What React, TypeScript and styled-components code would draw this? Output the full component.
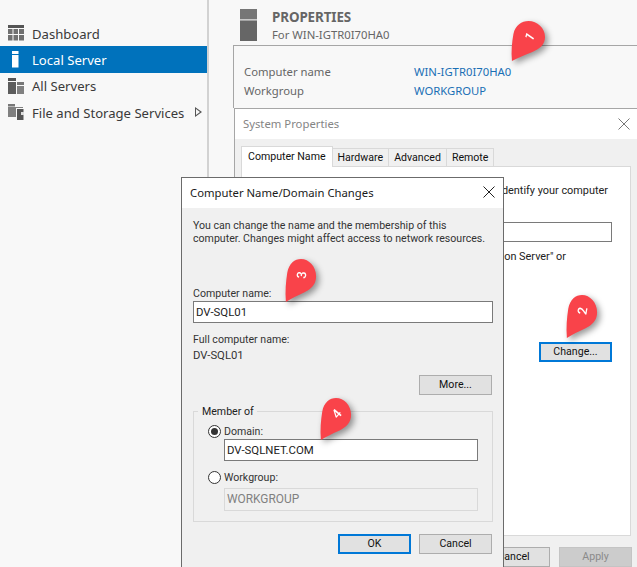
import styled, { createGlobalStyle } from 'styled-components'

const GlobalStyle = createGlobalStyle`
  html, body {
    margin: 0;
    padding: 0;
    background: #f8f8f8;
  }
  * {
    box-sizing: border-box;
  }
`

const Page = styled.div`
  position: relative;
  display: flex;
  width: 637px;
  height: 567px;
  overflow: hidden;
  background: #f8f8f8;
  font-family: 'Noto Sans', 'Open Sans', sans-serif;
  font-size: 11.3px;
  color: #222;
`

const Sidebar = styled.nav`
  flex: none;
  width: 209px;
  padding-top: 20px;
  border-right: 2px solid #d2d2d2;
`

const NavItem = styled.div<{ $active?: boolean }>`
  display: flex;
  align-items: center;
  gap: 8px;
  height: 26.3px;
  padding-left: 8px;
  font-size: 13.1px;
  color: ${(p) => (p.$active ? '#fff' : '#3a3a3a')};
  background: ${(p) => (p.$active ? '#0072bc' : 'transparent')};
  svg {
    flex: none;
  }
`

const NavLabel = styled.span`
  padding-top: 1px;
`

const Caret = styled.span`
  position: relative;
  margin-left: 3px;
  width: 0;
  height: 0;
  border-left: 7px solid #555;
  border-top: 5px solid transparent;
  border-bottom: 5px solid transparent;
  &::after {
    content: '';
    position: absolute;
    left: -6px;
    top: -3.5px;
    border-left: 4.5px solid #f8f8f8;
    border-top: 3.5px solid transparent;
    border-bottom: 3.5px solid transparent;
  }
`

const Main = styled.main`
  flex: 1;
  min-width: 0;
  display: flex;
  flex-direction: column;
`

const Header = styled.header`
  display: flex;
  gap: 15px;
  height: 45px;
  padding: 9px 0 0 31px;
`

const HeaderText = styled.div`
  color: #666;
`

const Title = styled.div`
  font-size: 13.4px;
  font-weight: 700;
  line-height: 17px;
  letter-spacing: -0.1px;
`

const Subtitle = styled.div`
  line-height: 18px;
`

const PropsPanel = styled.section`
  margin-left: 24px;
  margin-right: -4px;
  height: 64px;
  padding: 16px 0 0 10px;
  border: 1px solid #a6a6a6;
  border-bottom: 0;
`

const PropRow = styled.div`
  display: flex;
  height: 19px;
  line-height: 19px;
  color: #666;
`

const PropLabel = styled.span`
  width: 170px;
`

const PropLink = styled.span`
  color: #1a6fb5;
`

const SystemWindow = styled.section`
  flex: 1;
  margin-left: 25px;
  margin-right: -4px;
  display: flex;
  flex-direction: column;
  border-top: 1px solid #a6a6a6;
  border-left: 1px solid #a6a6a6;
  background: #f0f0f0;
`

const TitleBar = styled.div<{ $muted?: boolean }>`
  flex: none;
  display: flex;
  align-items: center;
  justify-content: space-between;
  height: 30px;
  padding: 0 ${(p) => (p.$muted ? '11px' : '8px')} ${(p) => (p.$muted ? '1px' : '2px')} 8px;
  background: #fff;
  color: ${(p) => (p.$muted ? '#858585' : '#1a1a1a')};
`

const SystemBody = styled.div`
  flex: 1;
  min-height: 0;
  padding: 7px 7px 0 6px;
  font-family: Roboto, 'Noto Sans', sans-serif;
  font-size: 10.6px;
`

const Tabs = styled.div`
  display: flex;
  align-items: flex-end;
  height: 20px;
`

const Tab = styled.div<{ $active?: boolean }>`
  position: relative;
  height: ${(p) => (p.$active ? '21px' : '18px')};
  line-height: ${(p) => (p.$active ? '19px' : '18px')};
  padding: 0 ${(p) => (p.$active ? '6px' : '5px')};
  margin-bottom: ${(p) => (p.$active ? '-1px' : '0')};
  background: ${(p) => (p.$active ? '#fff' : '#f0f0f0')};
  border: 1px solid #d9d9d9;
  border-bottom: 0;
  border-left-width: ${(p) => (p.$active ? '1px' : '0')};
  color: #111;
  white-space: nowrap;
`

const TabPane = styled.div`
  height: 370px;
  width: 390px;
  padding: 17px 18px 0 0;
  display: flex;
  flex-direction: column;
  align-items: flex-end;
  background: #fff;
  border: 1px solid #d9d9d9;
`

const PaneText = styled.div<{ $top?: number; $right?: number }>`
  margin-top: ${(p) => p.$top ?? 0}px;
  margin-right: ${(p) => p.$right ?? 0}px;
  font-size: 10.9px;
  line-height: 14px;
  white-space: nowrap;
`

const PaneInput = styled.div`
  margin-top: 24px;
  width: 300px;
  height: 20px;
  border: 1px solid #7a7a7a;
  background: #fff;
`

const Button = styled.button<{ $focused?: boolean; $disabled?: boolean }>`
  flex: none;
  width: 73px;
  height: 20px;
  padding: 0;
  font: inherit;
  line-height: 16px;
  color: ${(p) => (p.$disabled ? '#8a8a8a' : '#111')};
  background: ${(p) => (p.$disabled ? '#cccccc' : '#e1e1e1')};
  border: ${(p) =>
    p.$focused ? '2px solid #0078d7' : `1px solid ${p.$disabled ? '#c4c4c4' : '#adadad'}`};
`

const ChangeWrap = styled.div`
  margin-top: 78px;
`

const WindowFooter = styled.div`
  display: flex;
  justify-content: flex-end;
  gap: 9px;
  height: 20px;
  margin-top: 11px;
  width: 391px;
`

const Dialog = styled.section`
  position: absolute;
  left: 181px;
  top: 177px;
  width: 323px;
  height: 400px;
  border: 1px solid #6b6b6b;
  background: #f0f0f0;
  display: flex;
  flex-direction: column;
`

const DialogBody = styled.div`
  flex: 1;
  display: flex;
  flex-direction: column;
  padding: 11px 10px 0 11px;
  font-family: Roboto, 'Noto Sans', sans-serif;
  font-size: 10.6px;
`

const Intro = styled.p`
  margin: 0;
  line-height: 13px;
  color: #333;
  white-space: nowrap;
`

const FieldLabel = styled.label<{ $top?: number }>`
  display: block;
  margin-top: ${(p) => p.$top ?? 0}px;
  line-height: 15px;
  color: #333;
`

const TextBox = styled.div<{ $disabled?: boolean; $height?: number }>`
  height: ${(p) => p.$height ?? 22}px;
  line-height: ${(p) => (p.$height ?? 22) - 2}px;
  padding-left: 2px;
  font-size: ${(p) => (p.$disabled ? '11.9px' : '11.4px')};
  border: 1px solid ${(p) => (p.$disabled ? '#d9d9d9' : '#7a7a7a')};
  background: ${(p) => (p.$disabled ? '#f0f0f0' : '#fff')};
  color: ${(p) => (p.$disabled ? '#808080' : '#222')};
`

const FullName = styled.div`
  margin-top: 1px;
  font-size: 11.3px;
  line-height: 15px;
  color: #333;
`

const MoreRow = styled.div`
  display: flex;
  justify-content: flex-end;
  margin-top: 12px;
  padding-right: 1px;
`

const MemberBox = styled.fieldset`
  margin: 10px 0 0;
  padding: 6px 14px 0 14px;
  height: 117px;
  border: 1px solid #d9d9d9;
`

const MemberLegend = styled.legend`
  margin-left: -10px;
  padding: 0 3px 0 4px;
  line-height: 13px;
  color: #222;
`

const RadioRow = styled.div<{ $top?: number }>`
  display: flex;
  align-items: center;
  gap: 3px;
  height: 14px;
  margin-top: ${(p) => p.$top ?? 0}px;
  color: #333;
`

const Radio = styled.span<{ $checked?: boolean }>`
  flex: none;
  display: flex;
  align-items: center;
  justify-content: center;
  width: 13px;
  height: 13px;
  border: 1px solid #333;
  border-radius: 50%;
  background: #fff;
  &::after {
    content: '';
    width: 7px;
    height: 7px;
    border-radius: 50%;
    background: ${(p) => (p.$checked ? '#333' : 'transparent')};
  }
`

const Indented = styled.div<{ $top?: number }>`
  margin-left: 16px;
  margin-top: ${(p) => p.$top ?? 0}px;
`

const DialogFooter = styled.div`
  display: flex;
  justify-content: flex-end;
  gap: 8px;
  margin-top: 12px;
  padding-right: 1px;
`

const PinBox = styled.div<{ $x: number; $y: number; $w: number; $h: number }>`
  position: absolute;
  left: ${(p) => p.$x}px;
  top: ${(p) => p.$y}px;
  width: ${(p) => p.$w}px;
  height: ${(p) => p.$h}px;
  filter: drop-shadow(3px 3px 3px rgba(0, 0, 0, 0.4));
  svg {
    display: block;
    width: 100%;
    height: 100%;
  }
`

const PinNumber = styled.span<{ $turn: number }>`
  position: absolute;
  left: 50%;
  top: 7px;
  width: 20px;
  margin-left: -9px;
  text-align: center;
  font-family: Roboto, sans-serif;
  font-size: 13px;
  font-weight: 500;
  line-height: 20px;
  color: #fff;
  transform: rotate(${(p) => p.$turn}deg);
`

type PinProps = { x: number; y: number; w: number; h: number; turn: number; n: string }

const Pin = ({ x, y, w, h, turn, n }: PinProps) => (
  <PinBox $x={x} $y={y} $w={w} $h={h}>
    <svg viewBox="0 0 36 42" preserveAspectRatio="none">
      <path
        d="M1 41C0 31 1 22 2.5 14C4.5 5 11 1 18 1C27 1 35 8 35 17C35 25 29 29 22 32C14 35 7 38 1 41Z"
        fill="#f9434a"
      />
    </svg>
    <PinNumber $turn={turn}>{n}</PinNumber>
  </PinBox>
)

const Close = ({ color }: { color: string }) => (
  <svg width="12" height="12" viewBox="0 0 12 12">
    <path d="M0.5 0.5L11.5 11.5M11.5 0.5L0.5 11.5" stroke={color} fill="none" />
  </svg>
)

const DashboardIcon = () => (
  <svg width="16" height="16" viewBox="0 0 16 16" fill="#707070">
    <rect width="16" height="3" fill="#555" />
    <rect y="4" width="4.5" height="5" />
    <rect x="5.5" y="4" width="4.5" height="5" />
    <rect x="11" y="4" width="5" height="5" />
    <rect y="10" width="4.5" height="5.5" />
    <rect x="5.5" y="10" width="4.5" height="5.5" />
    <rect x="11" y="10" width="5" height="5.5" />
  </svg>
)

const LocalServerIcon = () => (
  <svg width="16" height="17" viewBox="0 0 16 17" fill="#fff">
    <rect x="4" y="0" width="6.5" height="3" />
    <rect x="4" y="4" width="6.5" height="12.5" />
  </svg>
)

const AllServersIcon = () => (
  <svg width="16" height="16" viewBox="0 0 16 16">
    <rect width="8" height="3" fill="#555" />
    <rect y="4" width="8" height="12" fill="#5c5c5c" />
    <rect x="9" y="4" width="7" height="3" fill="#777" />
    <rect x="9" y="8" width="7" height="8" fill="#808080" />
  </svg>
)

const StorageIcon = () => (
  <svg width="16" height="17" viewBox="0 0 16 17">
    <rect x="0" y="0" width="7" height="2.5" fill="#777" />
    <rect x="0" y="3" width="15" height="10" fill="#808080" />
    <rect x="8.5" y="4.5" width="7.5" height="12" fill="#555" stroke="#f8f8f8" />
    <rect x="13" y="8" width="3" height="3" fill="#ddd" />
  </svg>
)

const TowerIcon = () => (
  <svg width="17" height="32" viewBox="0 0 17 32" style={{ flex: 'none' }}>
    <rect width="17" height="10" fill="#767676" />
    <rect y="10" width="17" height="1.5" fill="#c9c9c9" />
    <rect y="11.5" width="17" height="20.5" fill="#666" />
  </svg>
)

const App = () => (
  <Page>
    <GlobalStyle />
    <Sidebar>
      <NavItem>
        <DashboardIcon />
        <NavLabel>Dashboard</NavLabel>
      </NavItem>
      <NavItem $active>
        <LocalServerIcon />
        <NavLabel>Local Server</NavLabel>
      </NavItem>
      <NavItem>
        <AllServersIcon />
        <NavLabel>All Servers</NavLabel>
      </NavItem>
      <NavItem>
        <StorageIcon />
        <NavLabel>File and Storage Services</NavLabel>
        <Caret />
      </NavItem>
    </Sidebar>
    <Main>
      <Header>
        <TowerIcon />
        <HeaderText>
          <Title>PROPERTIES</Title>
          <Subtitle>For WIN-IGTR0I70HA0</Subtitle>
        </HeaderText>
      </Header>
      <PropsPanel>
        <PropRow>
          <PropLabel>Computer name</PropLabel>
          <PropLink>WIN-IGTR0I70HA0</PropLink>
        </PropRow>
        <PropRow>
          <PropLabel>Workgroup</PropLabel>
          <PropLink>WORKGROUP</PropLink>
        </PropRow>
      </PropsPanel>
      <SystemWindow>
        <TitleBar $muted>
          System Properties
          <Close color="#777" />
        </TitleBar>
        <SystemBody>
          <Tabs>
            <Tab $active>Computer Name</Tab>
            <Tab>Hardware</Tab>
            <Tab>Advanced</Tab>
            <Tab>Remote</Tab>
          </Tabs>
          <TabPane>
            <PaneText $right={4}>identify your computer</PaneText>
            <PaneInput />
            <PaneText $top={8} $right={46}>
              on Server" or
            </PaneText>
            <ChangeWrap>
              <Button $focused>Change...</Button>
            </ChangeWrap>
          </TabPane>
          <WindowFooter>
            <Button>Cancel</Button>
            <Button $disabled>Apply</Button>
          </WindowFooter>
        </SystemBody>
      </SystemWindow>
    </Main>
    <Dialog>
      <TitleBar>
        Computer Name/Domain Changes
        <Close color="#222" />
      </TitleBar>
      <DialogBody>
        <Intro>
          You can change the name and the membership of this
          <br />
          computer. Changes might affect access to network resources.
        </Intro>
        <FieldLabel $top={41}>Computer name:</FieldLabel>
        <TextBox>DV-SQL01</TextBox>
        <FieldLabel $top={9}>Full computer name:</FieldLabel>
        <FullName>DV-SQL01</FullName>
        <MoreRow>
          <Button>More...</Button>
        </MoreRow>
        <MemberBox>
          <MemberLegend>Member of</MemberLegend>
          <RadioRow>
            <Radio $checked />
            Domain:
          </RadioRow>
          <Indented $top={1}>
            <TextBox>DV-SQLNET.COM</TextBox>
          </Indented>
          <RadioRow $top={9}>
            <Radio />
            Workgroup:
          </RadioRow>
          <Indented $top={4}>
            <TextBox $disabled $height={23}>
              WORKGROUP
            </TextBox>
          </Indented>
        </MemberBox>
        <DialogFooter>
          <Button $focused>OK</Button>
          <Button>Cancel</Button>
        </DialogFooter>
      </DialogBody>
    </Dialog>
    <Pin x={511} y={20} w={35} h={42} turn={-55} n="1" />
    <Pin x={566} y={294} w={32} h={45} turn={-80} n="2" />
    <Pin x={285} y={258} w={32} h={45} turn={-85} n="3" />
    <Pin x={320} y={397} w={32} h={44} turn={-50} n="4" />
  </Page>
)

export default App
